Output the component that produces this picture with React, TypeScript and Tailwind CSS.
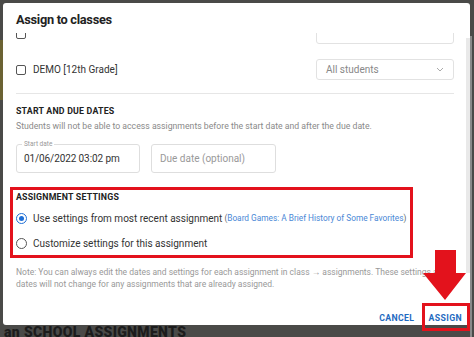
import React from "react";

const font = { fontFamily: "Roboto, 'Open Sans', sans-serif" };

function Checkbox() {
  return <div className="w-[10px] h-[10px] border-[1.5px] border-[#555] rounded-[2px] bg-white shrink-0" />;
}

function Radio({ checked }: { checked?: boolean }) {
  return checked ? (
    <div className="w-[11px] h-[11px] rounded-full border-[1.5px] border-[#1f6fd6] flex items-center justify-center shrink-0">
      <div className="w-[5px] h-[5px] rounded-full bg-[#1f6fd6]" />
    </div>
  ) : (
    <div className="w-[11px] h-[11px] rounded-full border-[1.5px] border-[#555] shrink-0" />
  );
}

function Select({ label }: { label?: string }) {
  return (
    <div className="w-[138px] h-[21px] border border-[#e2e2e2] rounded-[3px] flex items-center justify-between pl-[9px] pr-[9px]">
      <span className="text-[10px] text-[#888]">{label}</span>
      {label && (
        <svg width="8" height="5" viewBox="0 0 8 5" fill="none">
          <path d="M1 1l3 3 3-3" stroke="#aaa" strokeWidth="1" />
        </svg>
      )}
    </div>
  );
}

export default function App() {
  return (
    <div className="relative w-[474px] h-[337px] overflow-hidden bg-[#4a4a48]" style={font}>
      {/* page behind */}
      <div className="absolute left-0 top-[40px] w-[3px] h-[60px] bg-[#6b6233]" />
      <div className="absolute left-[470px] top-[36px] w-[2px] h-[301px] bg-[#8a8a8a]" />
      <div className="absolute left-[4px] top-[326px] text-[14px] font-black text-[#1c1c1c] tracking-wide leading-[12px] h-[11px] overflow-hidden">
        an SCHOOL ASSIGNMENTS
      </div>

      {/* dialog */}
      <div className="absolute left-[3px] top-[3px] w-[467px] h-[322px] bg-white rounded-[3px] flex flex-col overflow-hidden">
        <div className="h-[30px] shrink-0 pl-[13px] pt-[9px]">
          <h1 className="text-[12.8px] font-bold text-[#222] leading-[16px] tracking-[-0.3px]">Assign to classes</h1>
        </div>
        <div className="flex-1 flex min-h-0">
          <div className="flex-1 pl-[13px] pr-[12px] overflow-hidden">
            <div className="flex flex-col mt-[-10px]">
              <div className="h-[21px] flex items-center justify-between">
                <Checkbox />
                <Select />
              </div>
              <div className="h-[21px] mt-[15px] flex items-center justify-between">
                <div className="flex items-center gap-[7px]">
                  <Checkbox />
                  <span className="text-[10px] text-[#333]">DEMO [12th Grade]</span>
                </div>
                <Select label="All students" />
              </div>
              <div className="mt-[13px] h-px bg-[#e6e6e6]" />
              <div className="mt-[10px] text-[8.8px] font-bold text-[#222] leading-[14px] uppercase tracking-[0.2px]">Start and due dates</div>
              <div className="mt-px text-[8.7px] text-[#8a8a8a] leading-[14px]">
                Students will not be able to access assignments before the start date and after the due date.
              </div>
              <div className="mt-[11px] flex gap-[11px]">
                <div className="relative w-[124px] h-[29px] border border-[#dedede] rounded-[3px] flex items-center pl-[7px]">
                  <span className="absolute left-[5px] top-[-5px] bg-white px-[2px] text-[6.5px] text-[#999] leading-[8px]">Start date</span>
                  <span className="text-[10px] text-[#333] tracking-[-0.1px]">01/06/2022 03:02 pm</span>
                </div>
                <div className="w-[125px] h-[29px] border border-[#dedede] rounded-[3px] flex items-center pl-[8px]">
                  <span className="text-[10px] text-[#999]">Due date (optional)</span>
                </div>
              </div>
              <div className="mt-[17px] text-[8.8px] font-bold text-[#222] leading-[14px] uppercase tracking-[0.2px]">Assignment settings</div>
              <div className="mt-[4px] h-[20px] flex items-center gap-[6px]">
                <Radio checked />
                <span className="text-[10px] text-[#333]">Use settings from most recent assignment</span>
                <span className="text-[8.3px] text-[#666] -ml-[4px]">
                  (<span className="text-[#4a88d6]">Board Games: A Brief History of Some Favorites</span>)
                </span>
              </div>
              <div className="mt-[5px] h-[20px] flex items-center gap-[6px]">
                <Radio />
                <span className="text-[10px] text-[#333]">Customize settings for this assignment</span>
              </div>
              <div className="mt-[13px] text-[8.5px] text-[#999] leading-[12px] whitespace-nowrap">
                Note: You can always edit the dates and settings for each assignment in class → assignments. These settings and
                <br />
                dates will not change for any assignments that are already assigned.
              </div>
            </div>
          </div>
          <div className="w-[4px] bg-[#e9e9e9] mt-[5px] mb-[20px]" />
        </div>
        <div className="h-[32px] shrink-0 flex items-end justify-end gap-[14px] pr-[8px] pb-[1px]">
          <span className="text-[8.7px] font-bold text-[#1f6bc1] tracking-[0.4px] leading-[12px]">CANCEL</span>
          <span className="text-[8.7px] font-bold text-[#1f6bc1] tracking-[0.4px] leading-[12px]">ASSIGN</span>
        </div>
      </div>

      {/* annotations */}
      <div className="absolute left-[10px] top-[187px] w-[403px] h-[71px] border-[3px] border-[#e3121c]" />
      <div className="absolute left-[422px] top-[303px] w-[48px] h-[28px] border-[3px] border-[#e3121c]" />
      <svg className="absolute left-0 top-0" width="474" height="337" viewBox="0 0 474 337">
        <polygon points="435,250 456,250 456,273 466,273 445,300 423,273 435,273" fill="#e3121c" />
      </svg>
    </div>
  );
}
